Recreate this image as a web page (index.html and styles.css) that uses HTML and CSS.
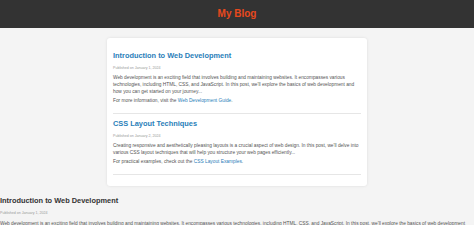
FILE: index.html
```html
<!DOCTYPE html>
<html lang="en">
<head>
  <meta charset="UTF-8">
  <title>My Blog</title>
  <link rel="stylesheet" href="styles.css">
</head>
<body>
<div class="header">
  <h1>My Blog</h1>
</div>
<div class="main">
  <div class="card">
    <div class="post">
      <h2>Introduction to Web Development</h2>
      <p class="date">Published on January 1, 2024</p>
      <p>Web development is an exciting field that involves building and maintaining websites. It encompasses various technologies, including HTML, CSS, and JavaScript. In this post, we'll explore the basics of web development and how you can get started on your journey...</p>
      <p>For more information, visit the <a href="#">Web Development Guide</a>.</p>
    </div>
    <div class="post">
      <h2>CSS Layout Techniques</h2>
      <p class="date">Published on January 2, 2024</p>
      <p>Creating responsive and aesthetically pleasing layouts is a crucial aspect of web design. In this post, we'll delve into various CSS layout techniques that will help you structure your web pages efficiently...</p>
      <p>For practical examples, check out the <a href="#">CSS Layout Examples</a>.</p>
    </div>
  </div>
</div>
<div class="full">
  <h2>Introduction to Web Development</h2>
  <p class="date">Published on January 1, 2024</p>
  <p>Web development is an exciting field that involves building and maintaining websites. It encompasses various technologies, including HTML, CSS, and JavaScript. In this post, we'll explore the basics of web development and how you can get started on your journey...</p>
</div>
</body>
</html>
```

FILE: styles.css
```css
*{ margin: 0; padding: 0; box-sizing: border-box;}
body{ font-family: "Liberation Sans", Arial, sans-serif; background: #f4f4f4; color: #555;}
a{ color: #2a80b9; text-decoration: none;}

.header{ height: 28px; background: #333; display: flex; align-items: center; justify-content: center;}
.header h1{ font-size: 10px; color: #e8491d; line-height: 12px;}

.main{ padding-top: 10px;}
.card{ width: 260px; margin: 0 auto; background: #fff; border-radius: 3px; padding: 8px 6px 11px; box-shadow: 0 0 3px rgba(0,0,0,.1);}
.post{ padding: 6px 0 9px; border-bottom: 1px solid #e6e6e6;}
.post h2{ font-size: 7.4px; line-height: 8px; color: #2a80b9;}
.post .date{ margin-top: 5px; font-size: 3.6px; line-height: 6px; color: #999;}
.post p{ margin-top: 2px; font-size: 4.8px; line-height: 7px;}
.post .date + p{ margin-top: 3px;}

.full{ padding-top: 11px;}
.full h2{ font-size: 7.4px; line-height: 8px; color: #333;}
.full .date{ margin-top: 5px; font-size: 3.6px; line-height: 6px; color: #999;}
.full p{ margin-top: 4px; font-size: 4.8px; line-height: 7px;}
```
